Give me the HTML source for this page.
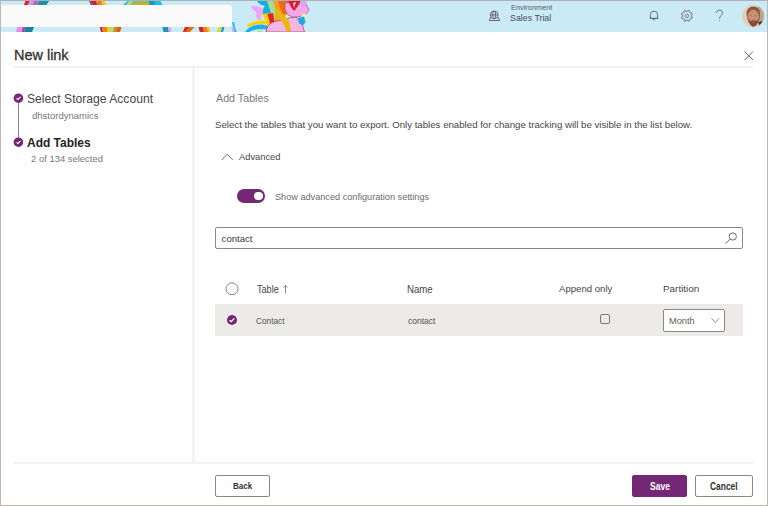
<!DOCTYPE html>
<html><head><meta charset="utf-8">
<style>
*{box-sizing:border-box;margin:0;padding:0}
html,body{width:768px;height:506px;overflow:hidden;background:#fff}
body{font-family:"Liberation Sans",sans-serif;color:#323130;position:relative}
.abs{position:absolute;white-space:nowrap}
#frame{position:absolute;left:0;top:0;width:768px;height:506px;border:1px solid #bbb7b5;border-top-color:#adb1b5;pointer-events:none;z-index:50}
#hdr{position:absolute;left:0;top:0;width:768px;height:32px;background:#caeaf6;overflow:hidden}
#sbox{position:absolute;left:1px;top:5px;width:231px;height:22px;background:#fafafa;border-radius:0 3px 3px 0}
.hline{position:absolute;height:2px;background:#f3f2f1}
.vline{position:absolute;width:1px;background:#edeceb;box-shadow:-1px 0 0 #f8f8f8,1px 0 0 #f8f8f8}
.btn{position:absolute;height:22px;border:1px solid #8a8886;border-radius:2px;background:#fff;font-weight:700;font-size:9.4px;letter-spacing:-0.4px;color:#323130;text-align:center;line-height:20px}
.t{position:absolute;white-space:nowrap;line-height:1;transform-origin:0 0;font-family:"Liberation Sans",sans-serif}
</style></head><body>
<div id="hdr">
<svg style="position:absolute;left:0;top:0" width="768" height="32" viewBox="0 0 768 32">
 <!-- top stripes left -->
 <polygon points="25.5,1 29.5,1 28,5 23.8,5" fill="#e8202a"/>
 <polygon points="29.5,1 34,1 32.5,5 28,5" fill="#e88de6"/>
 <polygon points="34,1 39,1 37.5,5 32.5,5" fill="#b06ab8"/>
 <polygon points="39,1 49,1 46.5,5 37.5,5" fill="#1b92aa"/>
 <!-- top stripes 90-106 -->
 <polygon points="89,1 91,1 93,5 91,5" fill="#a0307a"/>
 <polygon points="91,1 96,1 97.5,5 93,5" fill="#d0202c"/>
 <polygon points="96,1 101,1 102.5,5 97.5,5" fill="#f07a10"/>
 <polygon points="101,1 104.5,1 106,5 102.5,5" fill="#ffc010"/>
 <!-- top arch 123-162 -->
 <polygon points="127.5,1 160.5,1 162.6,5 122.9,5" fill="#1fc0e6"/>
 <polygon points="129,1 154,1 155,5 126,5" fill="#a8dc8a"/>
 <polygon points="133,1 149,1 150.5,5 130.5,5" fill="#8cbf6a"/>
 <polygon points="148.5,1 154,1 155.5,5 149.5,5" fill="#1a98b8"/>
 <path d="M134 5 Q142 0 150 5 Z" fill="#e0a810"/>
 <!-- bottom stripes left -->
 <polygon points="17.2,27 22.7,27 21.5,32 16,32" fill="#e88de6"/>
 <polygon points="22.7,27 25.4,27 24.2,32 21.5,32" fill="#b0489a"/>
 <polygon points="25.4,27 34,27 32,32 24.2,32" fill="#1686a4"/>
 <!-- bottom V 100-122 -->
 <polygon points="99.8,27 102,27 103,32 100.9,32" fill="#c8203a"/>
 <polygon points="102,27 107,27 107.5,32 103,32" fill="#e88010"/>
 <polygon points="107,27 110,27 110,32 107.5,32" fill="#ffc800"/>
 <polygon points="110,27 114,27 113,32 110,32" fill="#a8e08a"/>
 <polygon points="114,27 117,27 116,32 113,32" fill="#d09010"/>
 <polygon points="117,27 121.6,27 120,32 116,32" fill="#d86010"/>
 <!-- bottom 110-123 region left of box edge (from second zoom) -->
 <!-- bottom 160-237 -->
 <polygon points="162.3,27 168,27 169,32 163.5,32" fill="#1a98b8"/>
 <polygon points="168,27 170.5,27 171.5,32 169,32" fill="#f0a0ee"/>
 <polygon points="188,27 194.5,27 190,32 183,32" fill="#e07010"/>
 <polygon points="185,27 189,27 185,32 182.8,32" fill="#e0202a"/>
 <polygon points="198.6,27 203,27 204,32 199.8,32" fill="#d8202a"/>
 <polygon points="203,27 207,27 208,32 204,32" fill="#f08010"/>
 <polygon points="207,27 209,27 210,32 208,32" fill="#ffc010"/>
 <polygon points="218.5,27 220.5,27 219,32 216.8,32" fill="#ffd000"/>
 <polygon points="220.5,27 222.5,27 221,32 219,32" fill="#a8d890"/>
 <polygon points="222.5,27 224.4,27 223,32 221,32" fill="#1a90b0"/>
 <polygon points="231.5,27 233.5,27 234.5,32 232.5,32" fill="#e8a0ea"/>
 <polygon points="233.5,27 235,27 236.7,32 234.5,32" fill="#20c0e8"/>
 <polygon points="232,22 234,22 235,27 233,27" fill="#20c0e8"/>
 <!-- unicorn -->
 <g>
  <path d="M251,6 Q256,5 262,8 L263,14 Q259,16 262,19 L258,20 Q255,15 256,12 Q252,10 251,6 Z" fill="#f2a6f0"/>
  <path d="M257,1 L270,1 L272,14 L263,14 Q262,9 265,6 Q259,5 257,1 Z" fill="#18ade0"/>
  <path d="M267,1 L277,1 L277,22 L269,22 L271,13 Z" fill="#a6dc94"/>
  <path d="M273,1 L290,1 L287,14 L281,22 L275,22 Q277,10 273,1 Z" fill="#f5a21a"/>
  <path d="M278,1 L288,1 L287,13 L283,15 Q280,8 278,1 Z" fill="#f06a10"/>
  <path d="M262,14 L273,13 L275,24 L268,28 Q266,20 262,14 Z" fill="#ffd000"/>
  <path d="M267.5,14 L273,13 L275,24 L271,27 Z" fill="#e8202a"/>
  <path d="M247,25 Q256,19 268,21 L269,24.5 Q257,22.5 248.5,27.5 Z" fill="#ffd000"/>
  <path d="M245,32 Q250,24.5 262,24.5 Q268,25 270,28 L268,30 Q258,27.5 249,32 Z" fill="#18b0e6"/>
  <path d="M256,32 Q259,29 263,29 L262,32 Z" fill="#b0e0a0"/>
  <path d="M266,32 Q267,23 276,21 L284,20 Q290,17 296,17 L302,24 L304.5,32 Z" fill="#f4b6e2" stroke="#9a3a80" stroke-width="0.7"/>
  <path d="M276,9 Q283,13 289,21 L291,31 L286,31 Q285,23 277,17 Z" fill="#eeb410"/>
  <path d="M285,3 L300,1 L306,4 L309,10 L306,14 L300,16.5 L293,17 L288,15 L285,10 Z" fill="#f2a8e6" stroke="#9a3a80" stroke-width="0.6"/>
  <path d="M288,1 L301,1 L298,6 L294,11 L291,7 Z" fill="#e01828"/>
  <path d="M293,3 L296,2 L294,8 Z" fill="#f8d0e8"/>
  <path d="M300,1 L307,1 L305,6 L301,6 Z" fill="#d8a8f4"/>
  <path d="M301.5,14 L306,13.5 L306,18 L302,18 Z" fill="#f6e8b0"/>
  <path d="M298,18 L304,16.5 L305.5,22 L303,25.5 L299,23.5 Z" fill="#20a8e0"/>
 </g>
</svg>
  <div id="sbox"></div>
</div>

<!-- header right -->


<!-- header icons -->
<svg class="abs" style="left:484px;top:6px" width="20" height="20" viewBox="0 0 20 20">
 <g stroke="#5f5b5e" stroke-width="0.9" fill="none">
  <circle cx="10.2" cy="8.9" r="3.9"/>
  <ellipse cx="10.2" cy="8.9" rx="1.5" ry="3.9"/>
  <path d="M6.3 8.9 H14.1"/>
  <path d="M6.6 11.2 L5.4 14.5 H15.6 L14.3 11.2"/>
 </g>
</svg>
<svg class="abs" style="left:644px;top:6px" width="20" height="20" viewBox="0 0 20 20">
 <path d="M6.4 12.3 V8.7 A3.6 3.6 0 0 1 13.6 8.7 V12.3" stroke="#6e6c70" stroke-width="1" fill="none"/>
 <path d="M5.8 12.3 H14.2" stroke="#5f5d62" stroke-width="1.1" fill="none"/>
 <path d="M8.3 12.8 L10 14.8 L11.7 12.8 Z" fill="#6e6c70"/>
</svg>
<svg class="abs" style="left:677px;top:6px" width="20" height="20" viewBox="0 0 20 20">
 <path d="M10.54 5.55 L11.11 4.33 L12.91 5.08 L12.46 6.34 L13.36 7.24 L14.62 6.79 L15.37 8.59 L14.15 9.16 L14.15 10.44 L15.37 11.01 L14.62 12.81 L13.36 12.36 L12.46 13.26 L12.91 14.52 L11.11 15.27 L10.54 14.05 L9.26 14.05 L8.69 15.27 L6.89 14.52 L7.34 13.26 L6.44 12.36 L5.18 12.81 L4.43 11.01 L5.65 10.44 L5.65 9.16 L4.43 8.59 L5.18 6.79 L6.44 7.24 L7.34 6.34 L6.89 5.08 L8.69 4.33 L9.26 5.55 Z" stroke="#737177" stroke-width="0.95" fill="none" stroke-linejoin="miter"/>
 <circle cx="9.8" cy="9.9" r="1.7" stroke="#737177" stroke-width="0.95" fill="none"/>
</svg>
<svg class="abs" style="left:710px;top:6px" width="20" height="20" viewBox="0 0 20 20">
 <path d="M6.3 6.9 Q6.8 4 9.5 4 Q12.5 4.1 12.6 6.8 Q12.6 8.5 10.9 9.7 Q9.6 10.6 9.6 12.7" stroke="#6e6c70" stroke-width="0.95" fill="none"/>
 <circle cx="9.6" cy="14.6" r="0.55" fill="#8a888c"/>
</svg>
<!-- avatar -->
<svg class="abs" style="left:742px;top:5px" width="22" height="22" viewBox="0 0 22 22">
 <defs><clipPath id="av"><circle cx="11" cy="11" r="11"/></clipPath></defs>
 <g clip-path="url(#av)">
  <rect width="22" height="22" fill="#dcd0ba"/>
  <rect x="16" y="0" width="6" height="22" fill="#b9a58a"/>
  <path d="M4.5 9 Q4.5 1.5 11.5 1.5 Q18 1.5 18 9 L17.5 15 L5.5 15 Z" fill="#8a5a3c"/>
  <ellipse cx="11.3" cy="12" rx="5.8" ry="7.2" fill="#c98e78"/>
  <path d="M5.8 13.5 Q7 21 11.5 22 Q16 21 17 13.5 Q15 16.5 11.5 16.5 Q8 16.5 5.8 13.5 Z" fill="#8a4a34"/>
  <path d="M3 20 Q11 26 20 19 L22 22 L0 22 Z" fill="#4e2414"/>
  <path d="M16 17 Q18 19 17 23 L22 22 L22 16 Z" fill="#5a2c18"/>
  <path d="M7.6 10.8 H10 M12.6 10.8 H15" stroke="#8f6a5e" stroke-width="0.7"/>
  <path d="M9.5 16 Q11.5 15 13.5 16" stroke="#6e3424" stroke-width="0.8" fill="none"/>
 </g>
</svg>

<!-- dialog title -->
<div class="hline" style="left:14px;top:66px;width:739px"></div>
<div class="vline" style="left:193px;top:68px;height:394px"></div>
<div class="hline" style="left:14px;top:462px;width:739px"></div>

<!-- left steps -->

<!-- right content -->

<!-- search -->
<div class="abs" style="left:215px;top:227px;width:528px;height:22px;border:1px solid #8a8886;border-radius:2px"></div>

<!-- table header -->

<!-- row -->
<div class="abs" style="left:215px;top:304px;width:528px;height:32px;background:#edebe9"></div>
<div class="abs" style="left:663px;top:309px;width:62px;height:23px;border:1px solid #8a8886;border-radius:2px;background:#fff"></div>

<!-- buttons -->


<!-- step icons -->
<div class="abs" style="left:18px;top:103px;width:1px;height:35px;background:#a47aa4;box-shadow:0 0 0.6px #c8a8c8"></div>
<svg class="abs" style="left:13px;top:93px" width="11" height="11" viewBox="0 0 11 11"><circle cx="5.4" cy="5.2" r="4.8" fill="#742774"/><path d="M3.5 5.3 L4.9 6.5 L7.6 3.9" stroke="#fff" stroke-width="1.1" fill="none"/></svg>
<svg class="abs" style="left:13px;top:137px" width="11" height="11" viewBox="0 0 11 11"><circle cx="5.4" cy="5.2" r="4.8" fill="#742774"/><path d="M3.5 5.3 L4.9 6.5 L7.6 3.9" stroke="#fff" stroke-width="1.1" fill="none"/></svg>

<!-- close X -->
<svg class="abs" style="left:744px;top:51px" width="10" height="10" viewBox="0 0 10 10"><path d="M0.5 0.5 L9 9 M9 0.5 L0.5 9" stroke="#605e5c" stroke-width="1" fill="none"/></svg>

<!-- advanced chevron -->
<svg class="abs" style="left:221px;top:153px" width="13" height="8" viewBox="0 0 13 8"><path d="M0.8 7 L6.2 1.2 L11.8 7" stroke="#7f6a90" stroke-width="1" fill="none"/></svg>

<!-- toggle -->
<div class="abs" style="left:237px;top:189px;width:28px;height:14px;border-radius:7px;background:#742774"></div>
<div class="abs" style="left:254px;top:191.5px;width:8.5px;height:8.5px;border-radius:50%;background:#fff"></div>

<!-- search icon -->
<svg class="abs" style="left:723px;top:231px" width="16" height="15" viewBox="0 0 16 15"><circle cx="9.8" cy="5.5" r="3.6" stroke="#6e6c6a" stroke-width="1" fill="none"/><path d="M7.2 8.2 L2.5 12.6" stroke="#6e6c6a" stroke-width="1" fill="none"/></svg>

<!-- header circle -->
<svg class="abs" style="left:225px;top:282px" width="14" height="14" viewBox="0 0 14 14"><circle cx="7" cy="6.8" r="6" stroke="#8a8886" stroke-width="1" fill="none"/></svg>
<!-- sort arrow -->
<svg class="abs" style="left:281.5px;top:284px" width="7" height="10" viewBox="0 0 7 10"><path d="M3.5 1.5 L3.5 9.5 M1.6 3.6 L3.5 1.5 L5.4 3.6" stroke="#767472" stroke-width="0.85" fill="none"/></svg>
<!-- row check -->
<svg class="abs" style="left:225px;top:313px" width="14" height="14" viewBox="0 0 14 14"><circle cx="7" cy="7" r="5.9" fill="#fff"/><circle cx="7" cy="7" r="5.1" fill="#742774"/><path d="M4.5 7.1 L6.1 8.6 L9.4 5.4" stroke="#fff" stroke-width="1.3" fill="none"/></svg>
<!-- append checkbox -->
<div class="abs" style="left:600px;top:313.5px;width:10px;height:10px;border:1px solid #7a7876;border-radius:2px"></div>
<!-- dropdown chevron -->
<svg class="abs" style="left:710px;top:316px" width="11" height="8" viewBox="0 0 11 8"><path d="M1.4 2.2 L5.3 6.6 L9.2 2.2" stroke="#8a8886" stroke-width="0.9" fill="none"/></svg>

<div class="btn" style="left:215px;top:475px;width:55px"></div>
<div class="btn" style="left:632px;top:475px;width:55px;background:#742774;border-color:#742774"></div>
<div class="btn" style="left:695px;top:475px;width:58px"></div>
<span class="t" style="left:13.60px;top:48.64px;font-size:13.95px;font-weight:400;color:#323130;transform:scaleX(1.0366);-webkit-text-stroke:0.3px #323130">New link</span>
<span class="t" style="left:27.20px;top:92.50px;font-size:12.94px;font-weight:400;color:#484644;transform:scaleX(0.9369)">Select Storage Account</span>
<span class="t" style="left:31.60px;top:110.77px;font-size:9.60px;font-weight:400;color:#797775;transform:scaleX(0.9913)">dhstordynamics</span>
<span class="t" style="left:27.00px;top:136.55px;font-size:12.65px;font-weight:700;color:#252423;transform:scaleX(0.9471)">Add Tables</span>
<span class="t" style="left:31.00px;top:153.68px;font-size:9.59px;font-weight:400;color:#797775;transform:scaleX(0.9863)">2 of 134 selected</span>
<span class="t" style="left:216.20px;top:91.73px;font-size:11.77px;font-weight:400;color:#7a7876;transform:scaleX(0.9104)">Add Tables</span>
<span class="t" style="left:215.00px;top:119.60px;font-size:9.45px;font-weight:400;color:#484644;transform:scaleX(1.0232)">Select the tables that you want to export. Only tables enabled for change tracking will be visible in the list below.</span>
<span class="t" style="left:238.60px;top:152.74px;font-size:8.58px;font-weight:400;color:#484644;transform:scaleX(1.0872)">Advanced</span>
<span class="t" style="left:275.00px;top:192.58px;font-size:9.30px;font-weight:400;color:#6e6c6a;transform:scaleX(0.9840)">Show advanced configuration settings</span>
<span class="t" style="left:221.60px;top:233.72px;font-size:9.60px;font-weight:400;color:#3b3a39;transform:scaleX(1.0000)">contact</span>
<span class="t" style="left:257.00px;top:284.74px;font-size:10.17px;font-weight:400;color:#484644;transform:scaleX(0.8963)">Table</span>
<span class="t" style="left:407.40px;top:284.61px;font-size:10.03px;font-weight:400;color:#484644;transform:scaleX(0.9631)">Name</span>
<span class="t" style="left:559.00px;top:284.52px;font-size:9.01px;font-weight:400;color:#484644;transform:scaleX(1.0651)">Append only</span>
<span class="t" style="left:662.60px;top:283.73px;font-size:9.88px;font-weight:400;color:#484644;transform:scaleX(1.0032)">Partition</span>
<span class="t" style="left:256.40px;top:316.74px;font-size:8.58px;font-weight:400;color:#53514f;transform:scaleX(0.9625)">Contact</span>
<span class="t" style="left:408.00px;top:316.64px;font-size:8.40px;font-weight:400;color:#53514f;transform:scaleX(1.0168)">contact</span>
<span class="t" style="left:669.40px;top:316.69px;font-size:8.58px;font-weight:400;color:#5f5d5b;transform:scaleX(1.0753)">Month</span>
<span class="t" style="left:232.80px;top:481.62px;font-size:9.01px;font-weight:700;color:#323130;transform:scaleX(0.8964)">Back</span>
<span class="t" style="left:649.60px;top:481.64px;font-size:10.47px;font-weight:700;color:#ffffff;transform:scaleX(0.8177)">Save</span>
<span class="t" style="left:709.80px;top:480.62px;font-size:10.61px;font-weight:700;color:#323130;transform:scaleX(0.7932)">Cancel</span>
<span class="t" style="left:510.60px;top:3.68px;font-size:7.41px;font-weight:400;color:#5c5a60;transform:scaleX(0.9954)">Environment</span>
<span class="t" style="left:509.60px;top:12.51px;font-size:9.74px;font-weight:400;color:#4f4d53;transform:scaleX(0.9070)">Sales Trial</span>
<div id="frame"></div>
</body></html>
